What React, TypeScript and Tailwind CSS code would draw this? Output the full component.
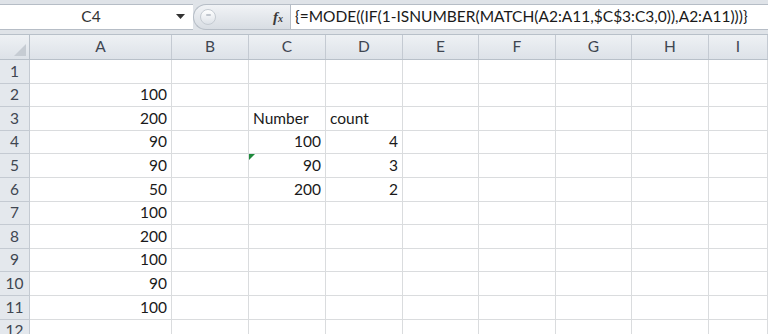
const cols = [
  { id: 'A', w: 'w-[142px]' },
  { id: 'B', w: 'w-[77px]' },
  { id: 'C', w: 'w-[77px]' },
  { id: 'D', w: 'w-[77px]' },
  { id: 'E', w: 'w-[76px]' },
  { id: 'F', w: 'w-[77px]' },
  { id: 'G', w: 'w-[76px]' },
  { id: 'H', w: 'w-[77px]' },
  { id: 'I', w: 'w-[59px]' },
]

type Cell = { v: string; left?: boolean; flag?: boolean }

const data: Record<number, Record<string, Cell>> = {
  2: { A: { v: '100' } },
  3: { A: { v: '200' }, C: { v: 'Number', left: true }, D: { v: 'count', left: true } },
  4: { A: { v: '90' }, C: { v: '100' }, D: { v: '4' } },
  5: { A: { v: '90' }, C: { v: '90', flag: true }, D: { v: '3' } },
  6: { A: { v: '50' }, C: { v: '200' }, D: { v: '2' } },
  7: { A: { v: '100' } },
  8: { A: { v: '200' } },
  9: { A: { v: '100' } },
  10: { A: { v: '90' } },
  11: { A: { v: '100' } },
}

const rows = [1, 2, 3, 4, 5, 6, 7, 8, 9, 10, 11, 12]

export default function App() {
  return (
    <div
      className="w-[768px] h-[334px] overflow-hidden bg-white text-[15.5px] text-[#1a1a1a]"
      style={{ fontFamily: 'Lato, "Open Sans", sans-serif' }}
    >
      {/* formula bar */}
      <div className="h-[34px] bg-[#dfe3e8] pt-[4px] pb-[4px] flex">
        <div className="w-[193px] h-[26px] bg-white border-y border-[#b6bdc6] flex items-center">
          <div className="flex-1 text-center pl-[6px] text-[#333]">C4</div>
          <svg width="9" height="6" viewBox="0 0 9 6" className="mr-[8px]">
            <path d="M0 0 L9 0 L4.5 5 Z" fill="#333" />
          </svg>
        </div>
        <div className="w-[97px] h-[26px] flex items-center">
          <div className="h-[26px] flex-1 rounded-l-[13px] border border-r-0 border-[#b6bdc6] bg-gradient-to-b from-[#f1f3f6] to-[#d8dde3] flex items-center pl-[6px]">
            <div className="w-[16px] h-[16px] rounded-full border border-[#c5cbd2] bg-gradient-to-b from-[#ffffff] to-[#dde2e8] flex items-start justify-center">
              <div className="w-[5px] h-[2px] bg-[#c0c6ce] mt-[4px] rounded-full" />
            </div>
            <div className="flex-1" />
            <span
              className="italic font-bold text-[15px] text-[#3a3a3a] mr-[7px]"
              style={{ fontFamily: '"Liberation Serif", serif' }}
            >
              f<span className="text-[10px]">x</span>
            </span>
          </div>
        </div>
        <div className="flex-1 h-[26px] bg-white border border-r-0 border-[#b6bdc6] flex items-center pl-[4px] whitespace-nowrap overflow-hidden">
          {'{=MODE((IF(1-ISNUMBER(MATCH(A2:A11,$C$3:C3,0)),A2:A11)))}'}
        </div>
      </div>

      {/* column headers */}
      <div className="flex h-[26px] bg-gradient-to-b from-[#eef1f4] to-[#dde2e8] border-t border-b border-[#b8c0c9]">
        <div className="w-[30px] border-r border-[#b8c0c9] flex items-end justify-end p-[3px]">
          <svg width="12" height="12" viewBox="0 0 12 12">
            <path d="M12 0 L12 12 L0 12 Z" fill="#c6ccd3" />
          </svg>
        </div>
        {cols.map((c) => (
          <div
            key={c.id}
            className={`${c.w} shrink-0 border-r border-[#c4cad2] flex items-center justify-center text-[#3f4651]`}
          >
            {c.id}
          </div>
        ))}
      </div>

      {rows.map((r) => (
        <div key={r} className="flex h-[23.6px]">
          <div className="w-[30px] shrink-0 bg-[#e4e8ed] border-r border-b border-[#c4cad2] flex items-center justify-center text-[#3f4651]">
            {r}
          </div>
          {cols.map((c) => {
            const cell = data[r]?.[c.id]
            return (
              <div
                key={c.id}
                className={`${c.w} shrink-0 relative border-r border-b border-[#dadcde] flex items-center px-[4px] ${cell?.left ? 'justify-start' : 'justify-end'}`}
              >
                {cell?.flag && (
                  <div className="absolute left-0 top-0 w-0 h-0 border-t-[6px] border-r-[6px] border-t-[#1e8a3c] border-r-transparent" />
                )}
                {cell?.v}
              </div>
            )
          })}
        </div>
      ))}
    </div>
  )
}
